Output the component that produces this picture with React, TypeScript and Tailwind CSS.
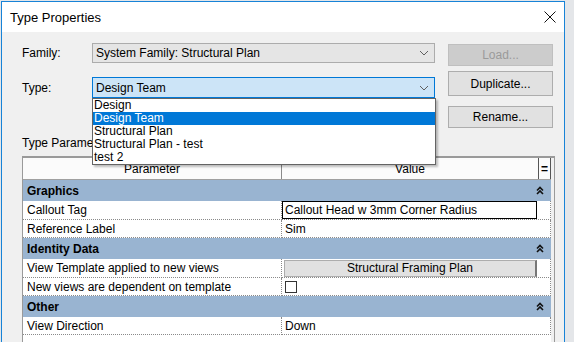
import React from 'react';

const Chevron = () => (
    <svg width="10" height="6" viewBox="0 0 10 6" className="shrink-0">
        <polyline points="1,1 5,5 9,1" fill="none" stroke="#606060" strokeWidth="1" />
    </svg>
);

const Collapse = () => (
    <svg width="8" height="9" viewBox="0 0 8 9" className="shrink-0">
        <polyline points="1,4.5 4,1.5 7,4.5" fill="none" stroke="#111" strokeWidth="1.6" />
        <polyline points="1,8 4,5 7,8" fill="none" stroke="#111" strokeWidth="1.6" />
    </svg>
);

const GroupRow = ({ label }: { label: string }) => (
    <div className="flex items-center h-[21px] bg-[#99b4d1] pl-[4px] pr-[7px] justify-between">
        <span className="font-bold">{label}</span>
        <Collapse />
    </div>
);

const ItemRow = ({ label, h, children }: { label: string; h: string; children?: React.ReactNode }) => (
    <div className={`flex ${h} bg-white`}>
        <div className="w-[259px] pl-[4px] flex items-center border-b border-r border-dotted border-[#8a8a8a]">{label}</div>
        <div className="flex-1 flex items-center border-b border-r border-dotted border-[#8a8a8a] pr-[13px]">{children}</div>
    </div>
);

export default function App() {
    const types = ['Design', 'Design Team', 'Structural Plan', 'Structural Plan - test', 'test 2'];

    return (
        <div className="w-[574px] h-[342px] overflow-hidden bg-[#e4e6e9] pl-[1px] pt-[1px] font-['Liberation_Sans',Arial,sans-serif] text-[12px] text-black">
            <div className="w-[564px] h-[342px] border border-b-0 border-[#1883d7] flex flex-col">
                {/* title bar */}
                <div className="h-[30px] bg-white flex items-center justify-between pl-[8px] pr-[8px] shrink-0">
                    <span className="text-[13px] pt-[1px]">Type Properties</span>
                    <svg width="12" height="12" viewBox="0 0 12 12">
                        <path d="M0.5 0.5 L11.5 11.5 M11.5 0.5 L0.5 11.5" stroke="#111" strokeWidth="1" />
                    </svg>
                </div>

                <div className="flex-1 bg-[#f0f0f0] relative">
                    {/* top section */}
                    <div className="h-[124px] flex pl-[20px]">
                        <div className="flex flex-col">
                            <div className="flex items-center h-[20px] mt-[11px]">
                                <span className="w-[70px]">Family:</span>
                                <div className="w-[343px] h-[20px] bg-[#e5e5e5] border border-[#acacac] flex items-center justify-between pl-[3px] pr-[5px]">
                                    <span>System Family: Structural Plan</span>
                                    <Chevron />
                                </div>
                            </div>
                            <div className="flex items-center h-[21px] mt-[14px]">
                                <span className="w-[70px]">Type:</span>
                                <div className="w-[343px] h-[21px] bg-[#cce4f7] border border-[#0078d7] flex items-center justify-between pl-[3px] pr-[5px]">
                                    <span>Design Team</span>
                                    <Chevron />
                                </div>
                            </div>
                            <div className="mt-[38px] leading-[14px]">Type Parameters</div>
                        </div>
                        <div className="flex flex-col ml-[13px] pt-[12px]">
                            <div className="w-[105px] h-[22px] bg-[#cccccc] border border-[#bfbfbf] flex items-center justify-center text-[#9a9a9a]">Load...</div>
                            <div className="w-[105px] h-[25px] mt-[5px] bg-[#e1e1e1] border border-[#adadad] flex items-center justify-center">Duplicate...</div>
                            <div className="w-[105px] h-[22px] mt-[10px] bg-[#e1e1e1] border border-[#adadad] flex items-center justify-center">Rename...</div>
                        </div>
                    </div>

                    {/* open type list */}
                    <div className="absolute left-[90px] top-[66px] z-10 w-[344px] bg-white border border-[#646464] shadow-[2px_2px_2px_rgba(0,0,0,0.25)]">
                        {types.map((t) => (
                            <div key={t} className={`h-[13px] leading-[13px] pl-[1px] ${t === 'Design Team' ? 'bg-[#0078d7] text-white' : ''}`}>
                                {t}
                            </div>
                        ))}
                    </div>

                    {/* parameter table */}
                    <div className="ml-[20px] w-[533px] h-[190px] border-t-2 border-l border-r border-[#9a9a9a] bg-white flex">
                        <div className="w-[528px]">
                            <div className="flex h-[22px] bg-[#fbfbfb] border-b border-[#a0a0a0]">
                                <div className="w-[259px] flex items-center justify-center border-r border-[#8a8a8a]">Parameter</div>
                                <div className="flex-1 flex items-center justify-center">Value</div>
                                <div className="w-[13px] flex items-center justify-center border-l border-r border-[#555] font-bold">=</div>
                            </div>
                            <GroupRow label="Graphics" />
                            <ItemRow label="Callout Tag" h="h-[19px]">
                                <div className="w-full h-full border-[1.5px] border-black pl-[2px] flex items-center">Callout Head w 3mm Corner Radius</div>
                            </ItemRow>
                            <ItemRow label="Reference Label" h="h-[18px]">
                                <span className="pl-[3px]">Sim</span>
                            </ItemRow>
                            <GroupRow label="Identity Data" />
                            <ItemRow label="View Template applied to new views" h="h-[19px]">
                                <div className="w-full h-[17px] ml-[2px] bg-[#e1e1e1] border border-[#adadad] border-r-2 border-r-[#777] flex items-center justify-center">Structural Framing Plan</div>
                            </ItemRow>
                            <ItemRow label="New views are dependent on template" h="h-[18px]">
                                <div className="ml-[3px] w-[12px] h-[12px] border border-[#333] bg-white" />
                            </ItemRow>
                            <GroupRow label="Other" />
                            <ItemRow label="View Direction" h="h-[18px]">
                                <span className="pl-[3px]">Down</span>
                            </ItemRow>
                        </div>
                        <div className="flex-1 bg-[#f0f0f0]" />
                    </div>
                </div>
            </div>
        </div>
    );
}
